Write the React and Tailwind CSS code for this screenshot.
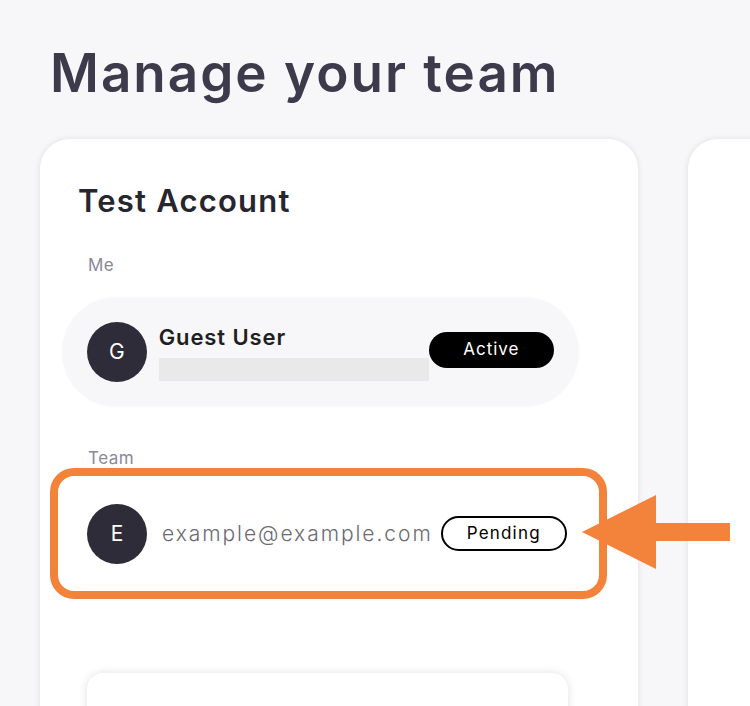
import React from "react";

const font = { fontFamily: "Inter, 'Noto Sans', sans-serif" };

export default function App() {
  return (
    <div
      className="relative w-[750px] h-[706px] overflow-hidden bg-[#f7f7f9]"
      style={font}
    >
      <h1 className="pl-[50px] pt-[38px] text-[53px] leading-[70px] font-semibold tracking-[2px] text-[#3d3b4b]">
        Manage your team
      </h1>
      <div className="mt-[31px] flex gap-[50px]">
        <div className="ml-[40px] w-[598px] h-[620px] shrink-0 rounded-[30px] bg-white shadow-[0_0_6px_rgba(0,0,0,0.10)] pt-[42px]">
          <h2 className="pl-[38px] text-[31px] leading-[40px] font-semibold tracking-[1.2px] text-[#27252e]">
            Test Account
          </h2>
          <div className="mt-[34px] pl-[48px] text-[17px] leading-[20px] tracking-[0.5px] text-[#8a8898]">
            Me
          </div>
          <div className="mt-[23px] ml-[23px] w-[515px] h-[108px] rounded-[54px] bg-[#f7f7f9] shadow-[0_0_3px_rgba(0,0,0,0.08)] flex items-center pl-[24px] pr-[24px]">
            <div className="w-[60px] h-[60px] rounded-full bg-[#2e2c38] flex items-center justify-center text-white text-[21px]">
              G
            </div>
            <div className="ml-[12px] flex flex-col">
              <div className="text-[22px] leading-[26px] font-semibold tracking-[0.9px] text-[#1f1e24]">
                Guest User
              </div>
              <div className="mt-[8px] w-[270px] h-[23px] bg-[#e9e9e9]" />
            </div>
            <div className="ml-auto -mt-[4px] w-[126px] h-[36px] rounded-full bg-black text-white text-[17px] tracking-[1px] flex items-center justify-center">
              Active
            </div>
          </div>
          <div className="mt-[42px] pl-[48px] text-[17px] leading-[20px] tracking-[0.5px] text-[#8a8898]">
            Team
          </div>
          <div className="mt-[0px] ml-[10px] w-[557px] h-[131px] rounded-[24px] border-[8px] border-[#f3823a] flex items-center pl-[29px]">
            <div className="w-[60px] h-[60px] rounded-full bg-[#2e2c38] flex items-center justify-center text-white text-[21px]">
              E
            </div>
            <div className="ml-[15px] text-[21px] font-light tracking-[1.95px] text-[#6b6a72]">
              example@example.com
            </div>
            <div className="ml-[8px] w-[126px] h-[35px] rounded-full border-2 border-black bg-white text-black text-[17px] tracking-[1.2px] flex items-center justify-center">
              Pending
            </div>
          </div>
          <div className="mt-[74px] ml-[47px] w-[481px] h-[60px] rounded-[16px] bg-white shadow-[0_0_10px_rgba(0,0,0,0.12)]" />
        </div>
        <div className="w-[120px] h-[620px] shrink-0 rounded-[30px] bg-white shadow-[0_0_6px_rgba(0,0,0,0.10)]" />
      </div>
      <svg
        className="absolute left-0 top-0"
        width="750"
        height="706"
        viewBox="0 0 750 706"
      >
        <polygon
          points="582,532 656,495 656,523 730,523 730,541 656,541 656,569"
          fill="#f3823a"
        />
      </svg>
    </div>
  );
}
